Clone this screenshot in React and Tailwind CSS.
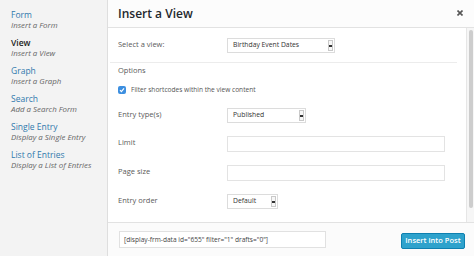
import React from "react";

const items = [
  { title: "Form", sub: "Insert a Form" },
  { title: "View", sub: "Insert a View", active: true },
  { title: "Graph", sub: "Insert a Graph" },
  { title: "Search", sub: "Add a Search Form" },
  { title: "Single Entry", sub: "Display a Single Entry" },
  { title: "List of Entries", sub: "Display a List of Entries" },
];

const Select = ({ value, width }) => (
  <div
    className="h-[15px] bg-white border border-[#dcdcdc] flex items-center justify-between pl-[5px] pr-[1px] text-[6.8px] text-[#333]"
    style={{ width }}
  >
    <span>{value}</span>
    <span className="w-[5px] h-[11px] border border-[#c9c9c9] bg-[#f7f7f7] flex items-center justify-center">
      <span className="w-[3px] h-[2px] bg-[#333]" />
    </span>
  </div>
);

const Row = ({ label, children, className = "" }) => (
  <div className={"flex items-start pl-[10px] " + className}>
    <div className="w-[109px] text-[7.5px] leading-[10px] mt-[1px] text-[#5a5a5a]">{label}</div>
    {children}
  </div>
);

const Input = () => (
  <div className="w-[218px] h-[16px] bg-white border border-[#e3e3e3]" />
);

export default function App() {
  return (
    <div
      className="w-[474px] h-[256px] flex bg-white overflow-hidden"
      style={{ fontFamily: '"Open Sans", "Liberation Sans", sans-serif' }}
    >
      <div className="w-[108px] shrink-0 bg-[#f3f3f3] border-r border-[#dedede] pt-[10px] pl-[11px]">
        {items.map((it) => (
          <div key={it.title} className="h-[28px]">
            <div
              className={
                "text-[8.5px] leading-[10px] " +
                (it.active ? "text-[#222] font-semibold" : "text-[#3079ad]")
              }
            >
              {it.title}
            </div>
            <div className="text-[7.9px] leading-[10px] italic text-[#666]">{it.sub}</div>
          </div>
        ))}
      </div>

      <div className="flex-1 flex flex-col">
        <div className="h-[28px] shrink-0 border-b border-[#e2e2e2] bg-[#fcfcfc] flex items-center justify-between pl-[10px] pr-[11px]">
          <h1 className="text-[12px] font-semibold text-[#23282d] leading-none">Insert a View</h1>
          <svg width="6" height="6" viewBox="0 0 6 6" className="mt-[-1px]">
            <path d="M0.5 0.5 L5.5 5.5 M5.5 0.5 L0.5 5.5" stroke="#555" strokeWidth="1.6" />
          </svg>
        </div>

        <div className="h-[195px] shrink-0 flex border-b border-[#e2e2e2]">
          <div className="w-[359px] border-r border-[#e6e6e6] pt-[10px]">
            <Row label="Select a view:">
              <Select value="Birthday Event Dates" width={108} />
            </Row>
            <div className="mt-[9px] ml-[2px] mr-[9px] h-px bg-[#ececec]" />
            <div className="mt-[2px] pl-[10px] text-[7.5px] leading-[10px] text-[#5a5a5a]">Options</div>
            <div className="mt-[10px] pl-[10px] flex items-center h-[10px]">
              <span className="w-[8px] h-[8px] rounded-[2px] bg-[#3d8fe0] flex items-center justify-center mr-[5px]">
                <svg width="6" height="6" viewBox="0 0 6 6">
                  <path d="M1 3.2 L2.4 4.6 L5 1.4" stroke="white" strokeWidth="1.2" fill="none" />
                </svg>
              </span>
              <span className="text-[6.6px] text-[#555]">Filter shortcodes within the view content</span>
            </div>
            <Row label="Entry type(s)" className="mt-[13px]">
              <Select value="Published" width={79} />
            </Row>
            <Row label="Limit" className="mt-[13px]">
              <Input />
            </Row>
            <Row label="Page size" className="mt-[13px]">
              <Input />
            </Row>
            <Row label="Entry order" className="mt-[13px]">
              <Select value="Default" width={51} />
            </Row>
          </div>
          <div className="flex-1 bg-[#f6f6f6] pt-[2px] pl-[2px] pr-[1px]">
            <div className="h-[178px] w-full rounded-[2px] bg-[#cdcdcd]" />
          </div>
        </div>

        <div className="flex-1 flex items-center justify-between pl-[11px] pr-[9px] bg-[#fbfbfb]">
          <div className="w-[207px] h-[17px] bg-white border border-[#e1e1e1] flex items-center pl-[4px] text-[6.6px] text-[#444]">
            [display-frm-data id="655" filter="1" drafts="0"]
          </div>
          <button className="w-[64px] h-[16px] mt-[2px] rounded-[2px] bg-[#2ea2cc] border border-[#0e80b0] text-white text-[7.5px] font-semibold leading-none">
            Insert into Post
          </button>
        </div>
      </div>
    </div>
  );
}
